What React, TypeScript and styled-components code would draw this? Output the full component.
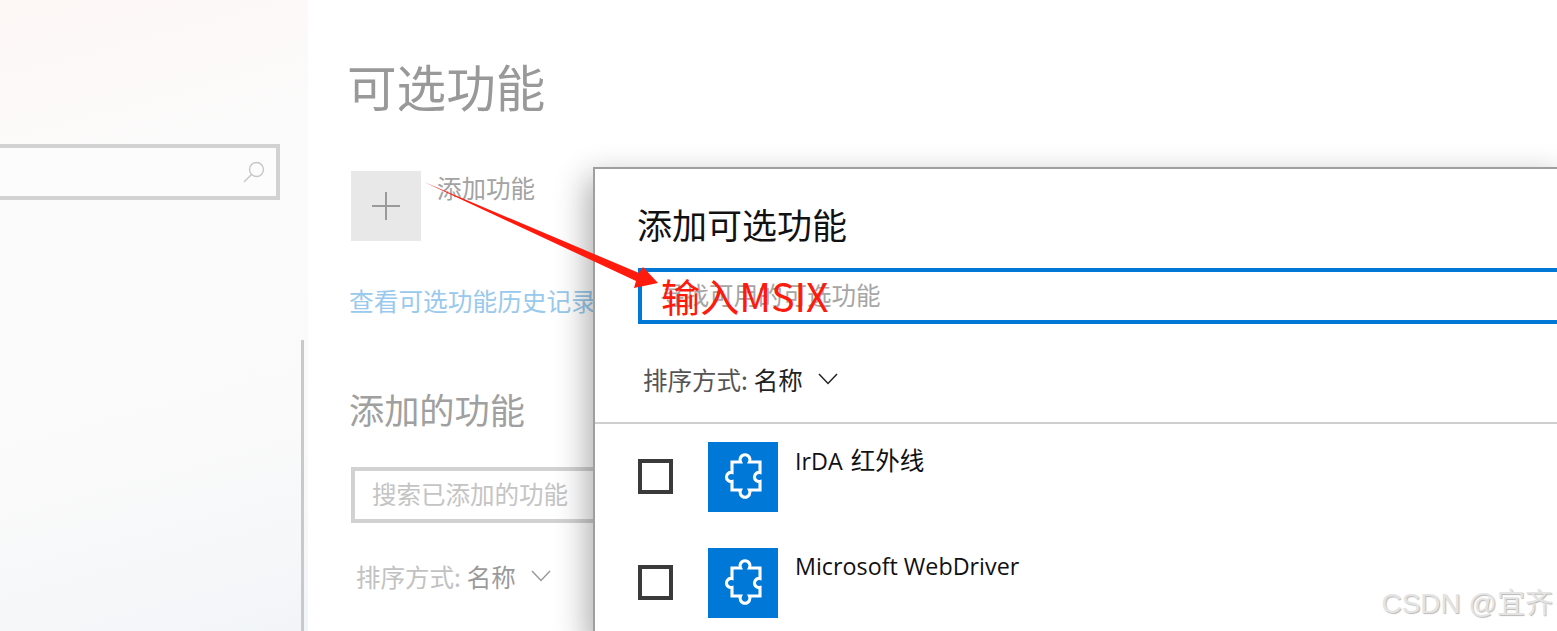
import React from 'react'
import styled, { createGlobalStyle } from 'styled-components'

const CJK = `'Noto Sans CJK SC', 'Noto Sans', sans-serif`

const GlobalStyle = createGlobalStyle`
    html,
    body {
        margin: 0;
        padding: 0;
        background: #fff;
        font-family: ${CJK};
    }
`

const Page = styled.div`
    position: relative;
    display: flex;
    width: 1557px;
    height: 631px;
    overflow: hidden;
    background: #fff;
`

const Sidebar = styled.div`
    position: relative;
    flex: 0 0 308px;
    box-sizing: border-box;
    padding: 144px 28px 0 0;
    background: linear-gradient(165deg, #fdf7f5 0%, #fbfbfb 28%, #fafafa 70%, #f2f5f8 100%);
`

const SidebarSearch = styled.div`
    display: flex;
    align-items: center;
    justify-content: flex-end;
    box-sizing: border-box;
    height: 56px;
    padding-right: 10px;
    border: 4px solid #d2d2d2;
    border-left: none;
    background: #fcfcfc;
`

const Scrollbar = styled.div`
    position: absolute;
    top: 340px;
    right: 4px;
    bottom: 0;
    width: 3px;
    background: #c9c9c9;
`

const Main = styled.div`
    flex: 1;
    display: flex;
    flex-direction: column;
    align-items: flex-start;
    padding: 51px 0 0 41px;
`

const Title = styled.div`
    margin-left: -2px;
    font-size: 49.6px;
    line-height: 68px;
    color: #999999;
`

const AddRow = styled.div`
    display: flex;
    gap: 16px;
    margin-top: 52px;
    margin-left: 2px;
`

const PlusTile = styled.div`
    display: flex;
    align-items: center;
    justify-content: center;
    width: 70px;
    height: 70px;
    background: #e8e8e8;
`

const AddLabel = styled.div`
    margin-top: -1px;
    font-size: 24.5px;
    line-height: 36px;
    color: #a3a3a3;
`

const HistoryLink = styled.div`
    margin-top: 41px;
    font-size: 24.7px;
    line-height: 36px;
    white-space: nowrap;
    color: #99c9ec;
`

const SectionTitle = styled.div`
    margin-top: 66px;
    font-size: 35.2px;
    line-height: 50px;
    color: #a0a0a0;
`

const FeatureSearch = styled.div`
    display: flex;
    align-items: center;
    box-sizing: border-box;
    width: 300px;
    height: 56px;
    margin-top: 33px;
    margin-left: 2px;
    padding: 0 0 4px 17px;
    border: 4px solid #d2d2d2;
    font-size: 24.5px;
    color: #c4c4c4;
`

const SortRow = styled.div<{ $dim?: boolean }>`
    display: flex;
    align-items: center;
    height: 36px;
    white-space: nowrap;
    font-size: 24.5px;
    color: ${({ $dim }) => ($dim ? '#c2c2c2' : '#555555')};

    b {
        margin-left: 6px;
        font-weight: 400;
        color: ${({ $dim }) => ($dim ? '#9a9a9a' : '#222222')};
    }

    svg {
        margin-left: 15px;
        stroke: ${({ $dim }) => ($dim ? '#9a9a9a' : '#222222')};
    }
`

const MainSort = styled(SortRow)`
    margin-top: 35px;
    margin-left: 7px;
`

const Dialog = styled.div`
    position: absolute;
    top: 167px;
    left: 593px;
    right: -10px;
    bottom: -10px;
    display: flex;
    flex-direction: column;
    padding-top: 32px;
    border: 2px solid #9f9f9f;
    border-right: none;
    border-bottom: none;
    background: #fff;
    box-shadow: -6px 10px 30px rgba(0, 0, 0, 0.32);
`

const DialogTitle = styled.div`
    margin-left: 42px;
    font-size: 35px;
    line-height: 46px;
    color: #111;
`

const DialogSearch = styled.div`
    display: flex;
    align-items: center;
    box-sizing: border-box;
    height: 56px;
    margin-top: 21px;
    margin-left: 43px;
    padding: 0 0 4px 18px;
    border: 4px solid #0078d7;
    font-size: 24.5px;
    color: #a6a6a6;
`

const DialogSort = styled(SortRow)`
    margin-top: 37px;
    margin-left: 48px;
`

const Divider = styled.div`
    height: 2px;
    margin-top: 25px;
    background: #cfcfcf;
`

const FeatureList = styled.div`
    display: flex;
    flex-direction: column;
    gap: 36px;
    margin-top: 18px;
    margin-left: 43px;
`

const FeatureRow = styled.div`
    display: flex;
    align-items: flex-start;
`

const CheckBox = styled.div`
    box-sizing: border-box;
    flex: 0 0 35px;
    width: 35px;
    height: 35px;
    margin-top: 17px;
    border: 4px solid #3a3a3a;
    background: #fff;
`

const FeatureTile = styled.div`
    display: flex;
    flex: 0 0 70px;
    width: 70px;
    height: 70px;
    margin-left: 35px;
    background: #0078d7;
`

const FeatureName = styled.div`
    display: flex;
    align-items: baseline;
    gap: 8px;
    margin-left: 17px;
    font-size: 24.5px;
    line-height: 36px;
    color: #111;
`

const Latin = styled.span`
    font-family: 'Open Sans', ${CJK};
    font-size: 23.3px;
`

const Arrow = styled.svg`
    position: absolute;
    top: 0;
    left: 0;
    width: 1557px;
    height: 631px;
    pointer-events: none;
`

const Annotation = styled.div`
    position: absolute;
    top: 267px;
    left: 661px;
    font-size: 39.2px;
    line-height: 56px;
    white-space: nowrap;
    color: #ff1a0e;
`

const Watermark = styled.div`
    position: absolute;
    right: 4px;
    top: 584px;
    font-size: 28px;
    line-height: 40px;
    white-space: nowrap;
    color: #e4e4e4;
    text-shadow: 1px 1px 1px rgba(0, 0, 0, 0.28);
    font-family: 'Liberation Sans', ${CJK};
`

function PuzzleIcon() {
    return (
        <svg viewBox="0 0 70 70" width="70" height="70" fill="none" stroke="#fff" strokeWidth="3.1">
            <path d="M24 20h8.5a5 5 0 1 1 9 0H52v10.5a4.6 4.6 0 1 0 0 9V48h-10.5a5 5 0 1 1-9 0H24v-8.5a4.6 4.6 0 1 1 0-9z" />
        </svg>
    )
}

function SearchGlass() {
    return (
        <svg viewBox="0 0 24 24" width="24" height="24" fill="none" stroke="#c6c6c6" strokeWidth="1.4">
            <circle cx="14.5" cy="9.5" r="7" />
            <path d="M9.5 14.5L2 22" />
        </svg>
    )
}

function PlusIcon() {
    return (
        <svg viewBox="0 0 30 30" width="30" height="30" stroke="#9a9a9a" strokeWidth="2">
            <path d="M1 15h28M15 1v28" />
        </svg>
    )
}

function SortChevron() {
    return (
        <svg viewBox="0 0 20 12" width="20" height="12" fill="none" strokeWidth="1.5">
            <path d="M1 1l9 9.5L19 1" />
        </svg>
    )
}

const features = [
    { id: 'irda', name: 'IrDA', suffix: '红外线' },
    { id: 'webdriver', name: 'Microsoft WebDriver', suffix: '' },
]

export default function App() {
    return (
        <Page>
            <GlobalStyle />
            <Sidebar>
                <SidebarSearch>
                    <SearchGlass />
                </SidebarSearch>
                <Scrollbar />
            </Sidebar>
            <Main>
                <Title>可选功能</Title>
                <AddRow>
                    <PlusTile>
                        <PlusIcon />
                    </PlusTile>
                    <AddLabel>添加功能</AddLabel>
                </AddRow>
                <HistoryLink>查看可选功能历史记录</HistoryLink>
                <SectionTitle>添加的功能</SectionTitle>
                <FeatureSearch>搜索已添加的功能</FeatureSearch>
                <MainSort $dim>
                    排序方式:<b>名称</b>
                    <SortChevron />
                </MainSort>
            </Main>
            <Dialog>
                <DialogTitle>添加可选功能</DialogTitle>
                <DialogSearch>寻找可用的可选功能</DialogSearch>
                <DialogSort>
                    排序方式:<b>名称</b>
                    <SortChevron />
                </DialogSort>
                <Divider />
                <FeatureList>
                    {features.map((feature) => (
                        <FeatureRow key={feature.id}>
                            <CheckBox />
                            <FeatureTile>
                                <PuzzleIcon />
                            </FeatureTile>
                            <FeatureName>
                                <Latin>{feature.name}</Latin>
                                {feature.suffix && <span>{feature.suffix}</span>}
                            </FeatureName>
                        </FeatureRow>
                    ))}
                </FeatureList>
            </Dialog>
            <Arrow viewBox="0 0 1557 631">
                <path d="M424 182L639 273L643 267L658 283L634 288L636 281Z" fill="#ff1a0e" />
            </Arrow>
            <Annotation>输入MSIX</Annotation>
            <Watermark>CSDN @宜齐</Watermark>
        </Page>
    )
}
